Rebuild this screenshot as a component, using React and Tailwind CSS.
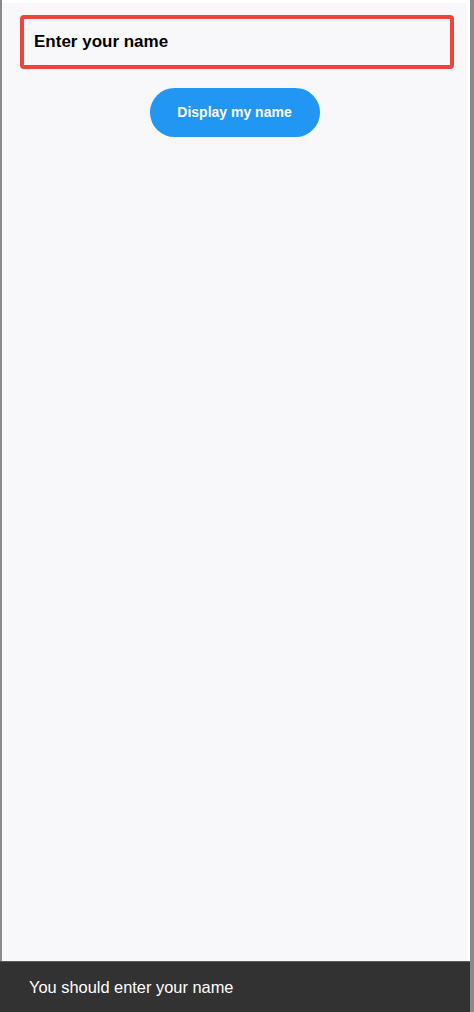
import React, { useState } from 'react';

const App = () => {
  const [name, setName] = useState('');

  return (
    <div className="relative flex h-[1012px] w-full overflow-hidden bg-[#8a8a8a] font-['Liberation_Sans',Arial,sans-serif]">
      <div className="ml-[2px] mr-[4px] flex flex-1 flex-col border-t-[3px] border-r-[3px] border-white bg-[#f8f8fa]">
        <div className="pl-[18px] pr-[13px] pt-[12px]">
          <input
            value={name}
            onChange={(e) => setName(e.target.value)}
            placeholder="Enter your name"
            className="h-[54px] w-full rounded-[4px] border-[4px] border-[#f04438] bg-transparent px-[10px] text-[17px] font-bold text-black outline-none placeholder:text-black"
          />
        </div>
        <div className="flex justify-center pt-[19px]">
          <button className="h-[49px] w-[170px] rounded-full bg-[#2196f3] text-[14px] font-bold text-white">
            Display my name
          </button>
        </div>
      </div>
      <div className="absolute bottom-0 left-0 right-[4px] flex h-[51px] items-center border-t border-[#5a5a5a] bg-[#323232] px-[29px]">
        <span className="text-[16.4px] text-white">You should enter your name</span>
      </div>
    </div>
  );
};

export default App;
